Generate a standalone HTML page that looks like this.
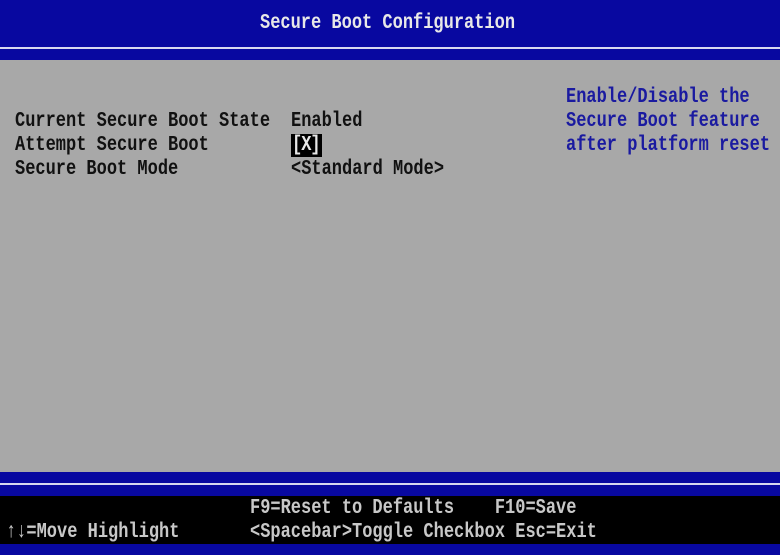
<!DOCTYPE html>
<html><head><style>
html,body{margin:0;padding:0;width:780px;height:555px;overflow:hidden;background:#a8a8a8}
.a{position:absolute;white-space:pre;font-family:"Liberation Mono",monospace;font-weight:bold;font-size:17px;line-height:24px;transform:scaleY(1.25);transform-origin:0 50%}
.r{position:absolute;left:0;width:780px}
</style></head><body>
<div class="r" style="top:0;height:60px;background:#0808a0"></div>
<div class="r" style="top:47px;height:2px;background:#d8d8f0"></div>
<div class="r" style="top:472px;height:24px;background:#0808a0"></div>
<div class="r" style="top:483px;height:2px;background:#d8d8f0"></div>
<div class="r" style="top:496px;height:48px;background:#000"></div>
<div class="r" style="top:544px;height:11px;background:#0808a0"></div>

<div class="a" style="left:260px;top:12px;color:#e8e8e8">Secure Boot Configuration</div>

<div class="a" style="left:15px;top:110px;color:#111">Current Secure Boot State</div>
<div class="a" style="left:15px;top:134px;color:#111">Attempt Secure Boot</div>
<div class="a" style="left:15px;top:158px;color:#111">Secure Boot Mode</div>
<div class="a" style="left:291px;top:110px;color:#111">Enabled</div>
<div style="position:absolute;left:291px;top:134px;width:31px;height:23px;background:#000"></div>
<div class="a" style="left:292px;top:134px;color:#e8e8e8;letter-spacing:-1px">[X]</div>
<div class="a" style="left:291px;top:158px;color:#111">&lt;Standard Mode&gt;</div>

<div class="a" style="left:566px;top:86px;color:#1a1aa0">Enable/Disable the</div>
<div class="a" style="left:566px;top:110px;color:#1a1aa0">Secure Boot feature</div>
<div class="a" style="left:566px;top:134px;color:#1a1aa0">after platform reset</div>

<div class="a" style="left:250px;top:497px;color:#c8c8c8">F9=Reset to Defaults    F10=Save</div>
<div class="a" style="left:6px;top:521px;color:#c8c8c8">↑↓=Move Highlight</div>
<div class="a" style="left:250px;top:521px;color:#c8c8c8">&lt;Spacebar&gt;Toggle Checkbox Esc=Exit</div>
</body></html>
